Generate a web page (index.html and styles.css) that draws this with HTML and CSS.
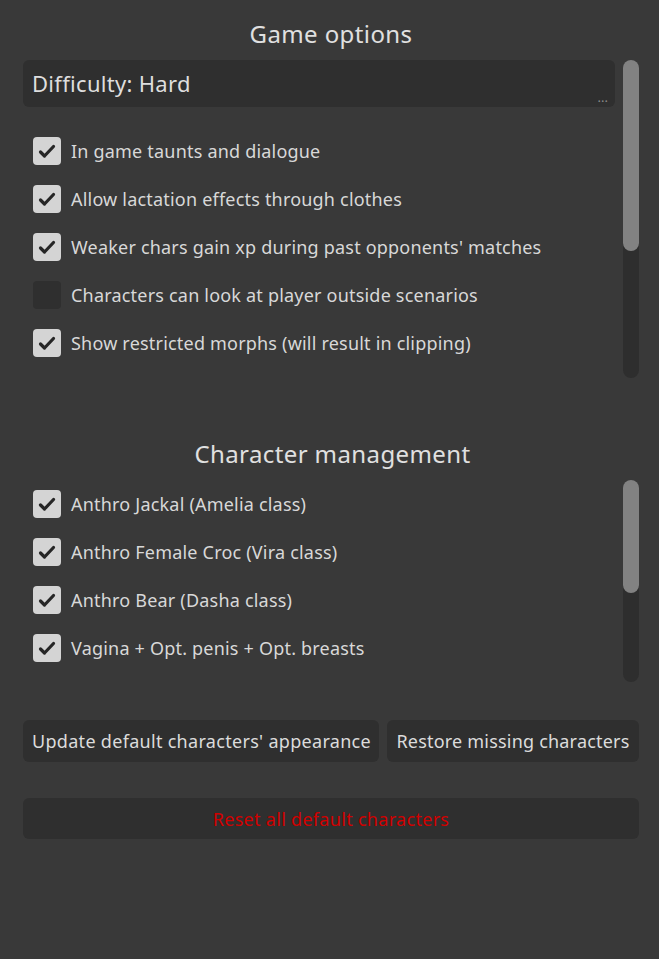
FILE: index.html
```html
<!DOCTYPE html>
<html lang="en">
<head>
  <meta charset="UTF-8">
  <title>Game options</title>
  <link rel="stylesheet" href="styles.css">
</head>
<body>
  <div class="panel">
    <h2 class="section-title">Game options</h2>
    <div class="scroll-area options-area">
      <div class="scroll-content">
        <div class="dropdown">
          <span>Difficulty: Hard</span>
          <span class="dots">...</span>
        </div>
        <ul class="check-list options-list">
          <li><span class="box checked"></span>In game taunts and dialogue</li>
          <li><span class="box checked"></span>Allow lactation effects through clothes</li>
          <li><span class="box checked"></span>Weaker chars gain xp during past opponents' matches</li>
          <li><span class="box"></span>Characters can look at player outside scenarios</li>
          <li><span class="box checked"></span>Show restricted morphs (will result in clipping)</li>
        </ul>
      </div>
      <div class="scrollbar"><div class="grabber grab-options"></div></div>
    </div>

    <h2 class="section-title second">Character management</h2>
    <div class="scroll-area chars-area">
      <div class="scroll-content">
        <ul class="check-list chars-list">
          <li><span class="box checked"></span>Anthro Jackal (Amelia class)</li>
          <li><span class="box checked"></span>Anthro Female Croc (Vira class)</li>
          <li><span class="box checked"></span>Anthro Bear (Dasha class)</li>
          <li><span class="box checked"></span>Vagina + Opt. penis + Opt. breasts</li>
        </ul>
      </div>
      <div class="scrollbar"><div class="grabber grab-chars"></div></div>
    </div>

    <div class="button-row">
      <button class="btn">Update default characters' appearance</button>
      <button class="btn">Restore missing characters</button>
    </div>
    <button class="btn btn-reset">Reset all default characters</button>
  </div>
</body>
</html>
```

FILE: styles.css
```css
body {
  margin: 0;
  background-color: #393939;
  color: #dcdcdc;
  font-family: "Noto Sans", "Open Sans", sans-serif;
}
.panel {
  padding: 0 20px 0 23px;
}
.section-title {
  margin: 0;
  height: 60px;
  line-height: 68px;
  text-align: center;
  font-size: 24px;
  letter-spacing: 0.4px;
  font-weight: normal;
  color: #e0e0e0;
}
.section-title.second {
  height: 60px;
  line-height: 68px;
  margin-top: 42px;
  margin-right: -3px;
}
.scroll-area {
  display: flex;
  gap: 8px;
}
.options-area {
  height: 318px;
}
.chars-area {
  height: 202px;
}
.scroll-content {
  flex: 1;
  overflow: hidden;
}
.scrollbar {
  width: 16px;
  background-color: #2e2e2e;
  border-radius: 8px;
}
.grabber {
  background-color: #828282;
  border-radius: 8px;
}
.grab-options {
  height: 191px;
}
.grab-chars {
  height: 113px;
}
.dropdown {
  position: relative;
  height: 47px;
  line-height: 47px;
  padding-left: 9px;
  background-color: #2f2f2f;
  border-radius: 6px;
  font-size: 22px;
  letter-spacing: 0.3px;
  color: #dedede;
}
.dots {
  position: absolute;
  right: 7px;
  bottom: 5px;
  line-height: 10px;
  font-size: 13px;
  letter-spacing: 0;
  color: #8a8a8a;
}
.check-list {
  list-style: none;
  margin: 0;
  padding: 0 0 0 10px;
}
.options-list {
  margin-top: 30px;
}
.chars-list {
  margin-top: 10px;
}
.check-list li {
  display: flex;
  align-items: center;
  gap: 10px;
  height: 28px;
  margin-bottom: 20px;
  font-size: 18px;
  letter-spacing: 0.2px;
  color: #d8d8d8;
}
.box {
  flex: none;
  width: 28px;
  height: 28px;
  border-radius: 4px;
  background-color: #2f2f2f;
  box-sizing: border-box;
}
.box.checked {
  background-color: #d4d4d4;
  background-image: url("data:image/svg+xml;utf8,<svg xmlns='http://www.w3.org/2000/svg' viewBox='0 0 28 28'><path d='M7.5 15 L11.5 19 L20.5 9.5' fill='none' stroke='%23262626' stroke-width='3.2' stroke-linecap='round' stroke-linejoin='round'/></svg>");
}
.button-row {
  display: flex;
  gap: 8px;
  margin-top: 38px;
}
.btn {
  height: 42px;
  padding: 0 9px;
  border: none;
  border-radius: 6px;
  background-color: #2f2f2f;
  color: #dcdcdc;
  font-family: "Noto Sans", "Open Sans", sans-serif;
  font-size: 18px;
  letter-spacing: 0.3px;
  white-space: nowrap;
}
.button-row .btn:first-child {
  flex: none;
  width: 356px;
}
.button-row .btn:last-child {
  flex: 1;
  padding: 0 4px;
  letter-spacing: 0.2px;
}
.btn-reset {
  display: block;
  width: 100%;
  height: 41px;
  margin-top: 36px;
  color: #d10000;
}
```
